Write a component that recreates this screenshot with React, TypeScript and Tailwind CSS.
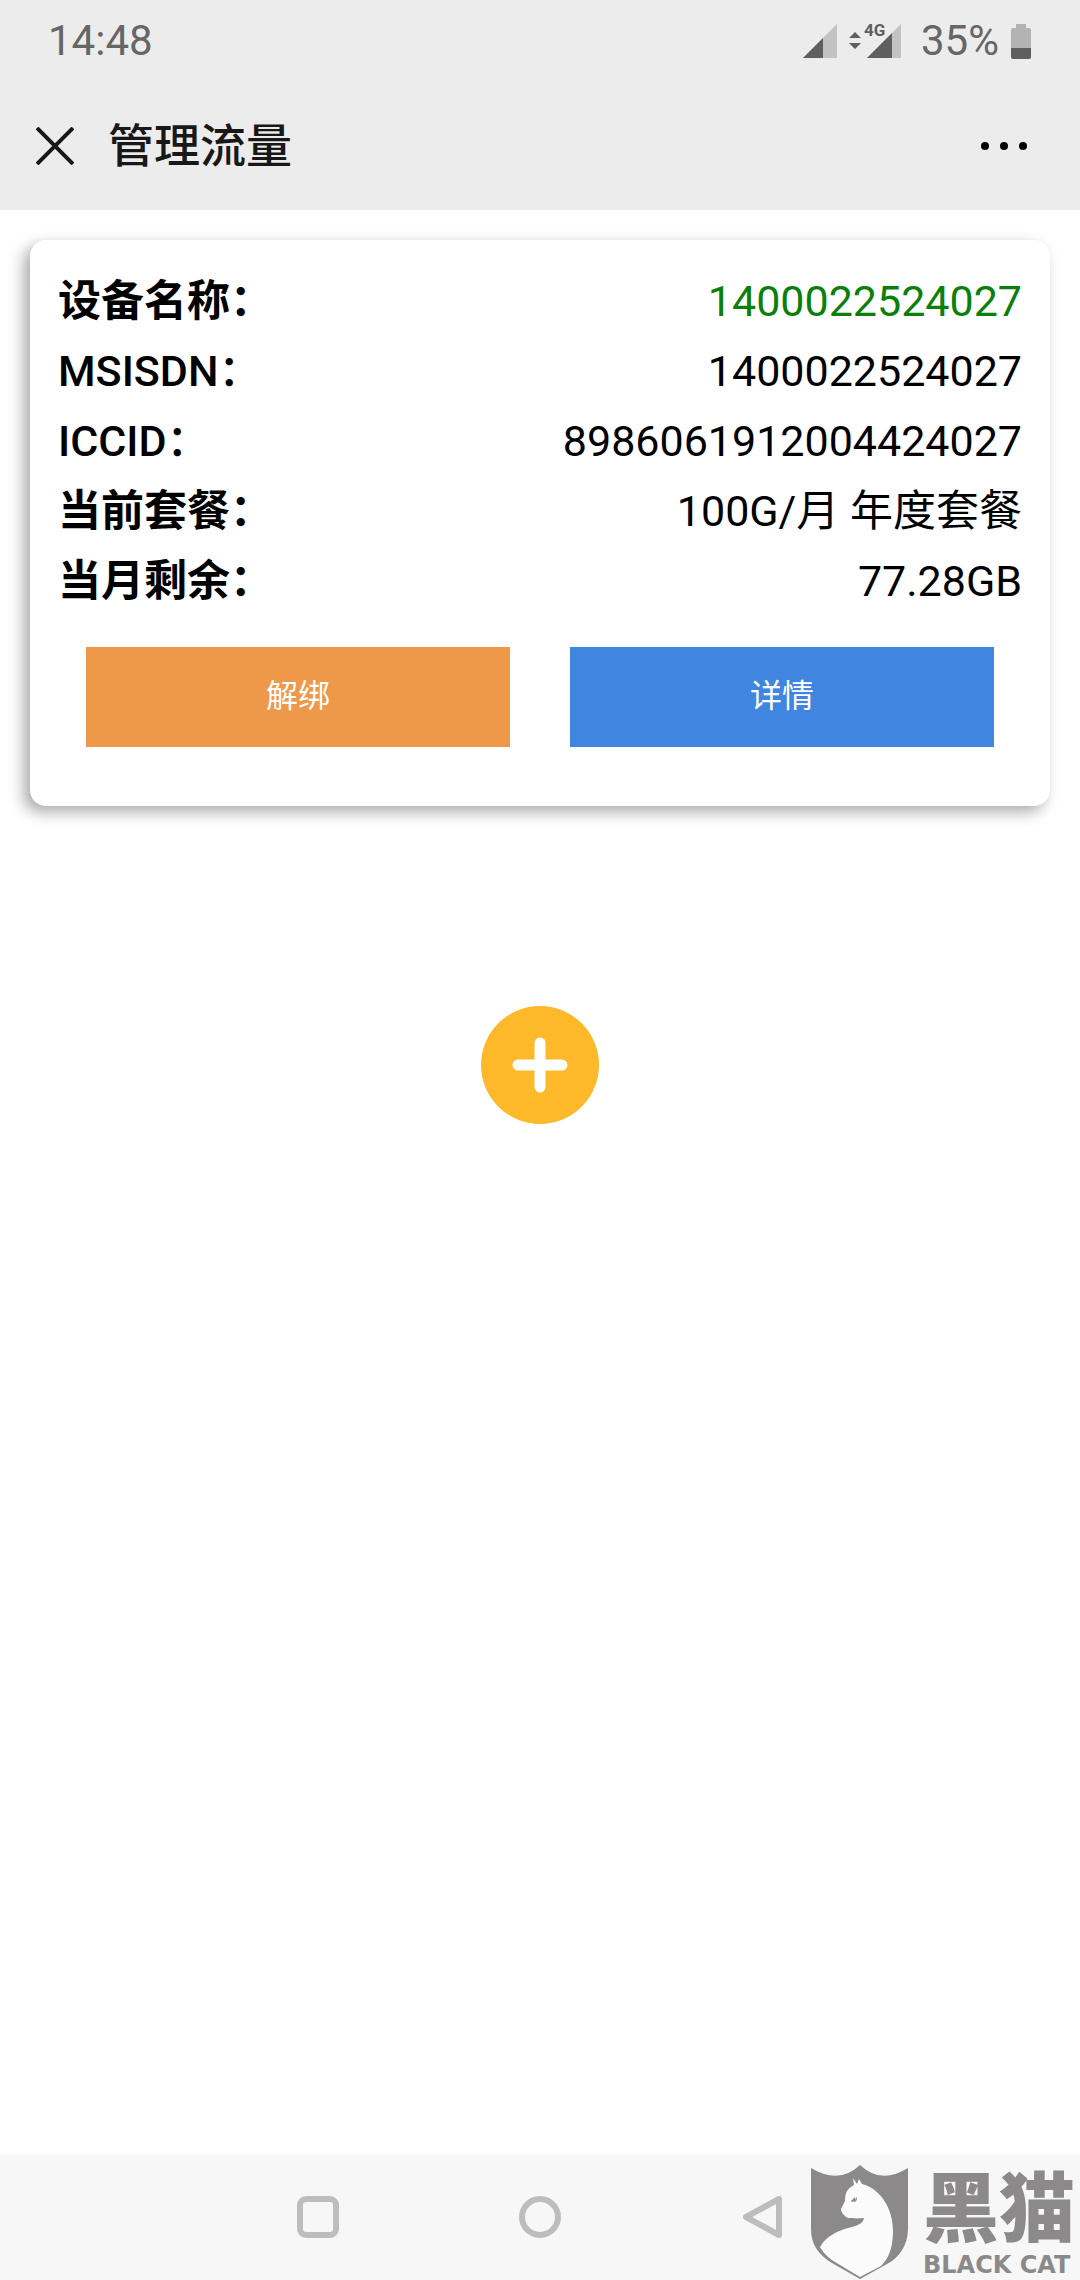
import type { ReactNode } from "react";

function StatusBar() {
  return (
    <div className="flex h-20 items-center justify-between pl-12 pr-[49px] pt-0.5 text-[42px] leading-none text-[#666666]">
      <time>14:48</time>
      <div className="flex items-center">
        <svg width="34" height="34" viewBox="0 0 34 34" aria-label="信号">
          <path d="M34 0V34H0Z" fill="#c2c2c2" />
          <path d="M20 14V34H0Z" fill="#5f5f5f" />
        </svg>
        <svg className="ml-3" width="52" height="50" viewBox="0 -8 52 50" aria-label="4G 信号">
          <path d="M6 8L12 14H0ZM6 25L12 19H0Z" fill="#5f5f5f" />
          <path d="M52 0V34H18Z" fill="#c2c2c2" />
          <path d="M43 9V34H18Z" fill="#5f5f5f" />
          <text x="15" y="12" fontSize="17" fontWeight="700" fill="#5f5f5f" stroke="#ececec" strokeWidth="3" paintOrder="stroke">
            4G
          </text>
        </svg>
        <span className="ml-5">35%</span>
        <svg className="ml-3" width="20" height="35" viewBox="0 0 20 35" aria-label="电量">
          <path d="M5 0H15V4H18Q20 4 20 6V33Q20 35 18 35H2Q0 35 0 33V6Q0 4 2 4H5Z" fill="#b3b3b3" />
          <path d="M0 24H20V33Q20 35 18 35H2Q0 35 0 33Z" fill="#5f5f5f" />
        </svg>
      </div>
    </div>
  );
}

function TitleBar() {
  return (
    <div className="flex h-[130px] items-center pl-9 pr-[52px] pt-0.5">
      <button type="button" aria-label="关闭" className="mr-[34px]">
        <svg className="block" width="38" height="38" viewBox="0 0 38 38" stroke="#181818" strokeWidth="4" aria-hidden="true">
          <path d="M1 1L37 37M37 1L1 37" />
        </svg>
      </button>
      <h1 className="flex-1 text-[46px] font-medium leading-none text-[#181818]">管理流量</h1>
      <button type="button" aria-label="更多">
        <svg className="block" width="48" height="10" viewBox="0 0 48 10" aria-hidden="true">
          <circle cx="5" cy="5" r="4" />
          <circle cx="24" cy="5" r="4" />
          <circle cx="43" cy="5" r="4" />
        </svg>
      </button>
    </div>
  );
}

function Row({ label, labelClass, valueClass, children }: { label: string; labelClass: string; valueClass?: string; children: ReactNode }) {
  return (
    <div className="flex h-[70px] items-center justify-between">
      <dt className={labelClass}>{label}</dt>
      <dd className={valueClass}>{children}</dd>
    </div>
  );
}

function DeviceCard() {
  return (
    <section className="mx-[30px] mt-[30px] rounded-2xl bg-white px-7 pb-[59px] pt-[26px] shadow-[-6px_6px_15px_#aaaaaa]">
      <dl className="text-[43px] leading-none text-black">
        <Row label="设备名称：" labelClass="font-bold" valueClass="text-[#0a800a]">1400022524027</Row>
        <Row label="MSISDN：" labelClass="font-medium">1400022524027</Row>
        <Row label="ICCID：" labelClass="font-medium">8986061912004424027</Row>
        <Row label="当前套餐：" labelClass="font-bold">100G/月 年度套餐</Row>
        <Row label="当月剩余：" labelClass="font-bold">77.28GB</Row>
      </dl>
      <div className="mt-[31px] grid grid-cols-2 gap-[60px] px-7 text-[32px] leading-none text-white">
        <button type="button" className="h-[100px] bg-[#ee9849] pb-0.5">解绑</button>
        <button type="button" className="h-[100px] bg-[#4086e0] pb-0.5">详情</button>
      </div>
    </section>
  );
}

function Watermark() {
  return (
    <div className="absolute bottom-0 right-0 flex items-end text-[#8b898a]">
      <svg className="block" width="98" height="116" viewBox="0 0 98 116" aria-hidden="true">
        <path d="M0 4Q28 21 49 1Q70 21 97 4V65C97 81 88 94 76 100L49 115L21 99C8 91 0 81 0 65Z" fill="currentColor" />
        <path d="M42 14L46 20L48 15L51 20C70 25 82 45 82 67C82 83 78 94 70 102L49 113L24 98C16 93 12 88 9 83C16 71 28 66 41 63C48 61 52 59 53 54C46 55 41 54 37 54C33 52 30 48 30 45L34 37C34 28 37 24 43 21Z" fill="#fbfbfb" />
        <path d="M40 37L44 33V37L41 38ZM45 34L46 33Q46 38 43 38Z" fill="currentColor" />
      </svg>
      <div className="ml-3.5 flex w-[157px] flex-col">
        <span className="text-[76px] font-black leading-[80px]">黑猫</span>
        <span className="whitespace-nowrap font-['DejaVu_Sans'] text-[24px] font-bold leading-[30px]">BLACK CAT</span>
      </div>
    </div>
  );
}

function NavBar() {
  return (
    <nav className="relative flex h-[126px] items-center justify-center gap-[180px] overflow-hidden bg-[#f7f7f7]">
      <button type="button" aria-label="最近任务">
        <svg className="block" width="42" height="42" viewBox="0 0 42 42" fill="none" stroke="#bdbdbd" strokeWidth="6">
          <rect x="3" y="3" width="36" height="36" rx="6" />
        </svg>
      </button>
      <button type="button" aria-label="主页">
        <svg className="block" width="42" height="42" viewBox="0 0 42 42" fill="none" stroke="#bdbdbd" strokeWidth="6">
          <circle cx="21" cy="21" r="18" />
        </svg>
      </button>
      <button type="button" aria-label="返回">
        <svg className="block" width="42" height="42" viewBox="0 0 42 42" fill="none" stroke="#bdbdbd" strokeWidth="6" strokeLinejoin="round">
          <path d="M38 3V39L5 21Z" />
        </svg>
      </button>
      <Watermark />
    </nav>
  );
}

export default function App() {
  return (
    <div className="flex min-h-screen flex-col bg-white font-['Roboto','Noto_Sans_CJK_SC',sans-serif]">
      <header className="bg-[#ececec]">
        <StatusBar />
        <TitleBar />
      </header>
      <main className="flex flex-1 flex-col">
        <DeviceCard />
        <button type="button" aria-label="添加设备" className="mt-[199px] self-center">
          <svg className="block" width="120" height="120" viewBox="0 0 120 120" aria-hidden="true">
            <circle cx="60" cy="60" r="59" fill="#fdb92a" />
            <path d="M60 38V82M38 60H82" stroke="#ffffff" strokeWidth="11" strokeLinecap="round" />
          </svg>
        </button>
      </main>
      <NavBar />
    </div>
  );
}
